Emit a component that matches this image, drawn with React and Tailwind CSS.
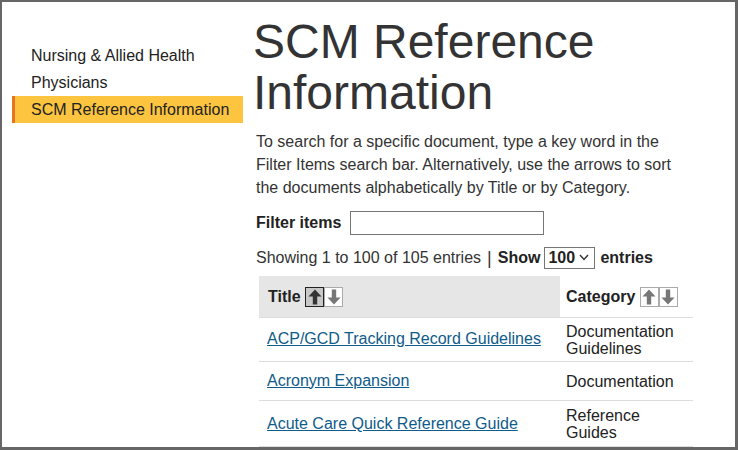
import React from "react";

const font = { fontFamily: '"Liberation Sans", Arial, sans-serif' };

const rows = [
  { title: "ACP/GCD Tracking Record Guidelines", category: ["Documentation", "Guidelines"], last: false },
  { title: "Acronym Expansion", category: ["Documentation"], last: false },
  { title: "Acute Care Quick Reference Guide", category: ["Reference", "Guides"], last: true },
];

function Arrow({ up, color }) {
  return (
    <svg width="14" height="16" viewBox="0 0 14 16">
      {up ? (
        <path d="M7 0.5 L13.5 7.5 H9.2 V15.5 H4.8 V7.5 H0.5 Z" fill={color} />
      ) : (
        <path d="M7 15.5 L13.5 8.5 H9.2 V0.5 H4.8 V8.5 H0.5 Z" fill={color} />
      )}
    </svg>
  );
}

function SortButtons({ active }) {
  return (
    <span className="inline-flex align-middle">
      <span
        className={
          active
            ? "w-[19px] h-[20px] flex items-center justify-center border border-[#222] bg-[#c8c8c8]"
            : "w-[19px] h-[20px] flex items-center justify-center border border-[#aaa] bg-white"
        }
      >
        <Arrow up color={active ? "#333" : "#777"} />
      </span>
      <span className="w-[19px] h-[20px] flex items-center justify-center border border-[#aaa] bg-white">
        <Arrow color="#777" />
      </span>
    </span>
  );
}

export default function App() {
  const nav = ["Nursing & Allied Health", "Physicians", "SCM Reference Information"];
  return (
    <div
      className="w-[738px] h-[450px] overflow-hidden flex bg-white border-l-2 border-t-2 border-r-[3px] border-b-[3px] border-[#666] text-[16px] text-[#333]"
      style={font}
    >
      <div className="w-[241px] shrink-0 pt-[40px] pl-[10px]">
        {nav.map((n, i) =>
          i === 2 ? (
            <div key={n} className="h-[27px] leading-[27px] border-l-[3px] border-[#e5761f] bg-[#fdc43f] pl-4 text-[#222]">
              {n}
            </div>
          ) : (
            <div key={n} className="h-[27px] leading-[27px] pl-[19px] text-[#222]">
              {n}
            </div>
          )
        )}
      </div>
      <div className="flex-1 pl-[13px]">
        <h1 className="mt-[14px] -ml-[3px] text-[48px] leading-[51px] text-[#333] font-normal">
          SCM Reference
          <br />
          Information
        </h1>
        <p className="mt-[12px] leading-[23px] w-[430px]">
          To search for a specific document, type a key word in the Filter Items search bar. Alternatively, use the arrows to sort
          the documents alphabetically by Title or by Category.
        </p>
        <div className="mt-[12px] flex items-center h-[24px]">
          <span className="font-bold text-[#222]">Filter items</span>
          <input className="ml-[9px] w-[194px] h-[24px] border border-[#767676] outline-none" />
        </div>
        <div className="mt-[11px] flex items-center h-[23px]">
          <span>Showing 1 to 100 of 105 entries</span>
          <span className="mx-[6px] text-[18px] leading-none">|</span>
          <span className="font-bold text-[#222]">Show</span>
          <span className="ml-[4px] h-[22px] w-[51px] border border-[#767676] flex items-center pl-[3px] font-bold text-[#222]">
            100
            <svg className="ml-[4px]" width="10" height="7" viewBox="0 0 10 7">
              <path d="M1 1 L5 5.5 L9 1" stroke="#333" strokeWidth="1.4" fill="none" />
            </svg>
          </span>
          <span className="ml-[5px] font-bold text-[#222]">entries</span>
        </div>
        <table className="mt-[7px] ml-[3px] w-[434px] border-collapse">
          <thead>
            <tr className="border-b border-[#ddd]">
              <th className="w-[301px] h-[41px] bg-[#e6e6e6] text-left pl-[9px] font-bold text-[#222]">
                <span className="align-middle">Title</span> <SortButtons active />
              </th>
              <th className="text-left pl-[6px] font-bold text-[#222]">
                <span className="align-middle">Category</span> <SortButtons />
              </th>
            </tr>
          </thead>
          <tbody>
            {rows.map((r) => (
              <tr key={r.title} className="border-b border-[#ddd]">
                <td className={r.last ? "align-middle pl-[8px] pt-[12px] pb-[10px] leading-[18px]" : "align-middle pl-[8px] py-[10px] leading-[18px]"}>
                  <a href="#" className="text-[#0f5b8a] underline">
                    {r.title}
                  </a>
                </td>
                <td className={r.last ? "align-middle pl-[6px] pt-[6px] pb-[4px] leading-[17.6px] text-[#222]" : "align-middle pl-[6px] pt-[5px] pb-[3px] leading-[17.6px] text-[#222]"}>
                  {r.category.map((c) => (
                    <div key={c}>{c}</div>
                  ))}
                </td>
              </tr>
            ))}
          </tbody>
        </table>
      </div>
    </div>
  );
}
